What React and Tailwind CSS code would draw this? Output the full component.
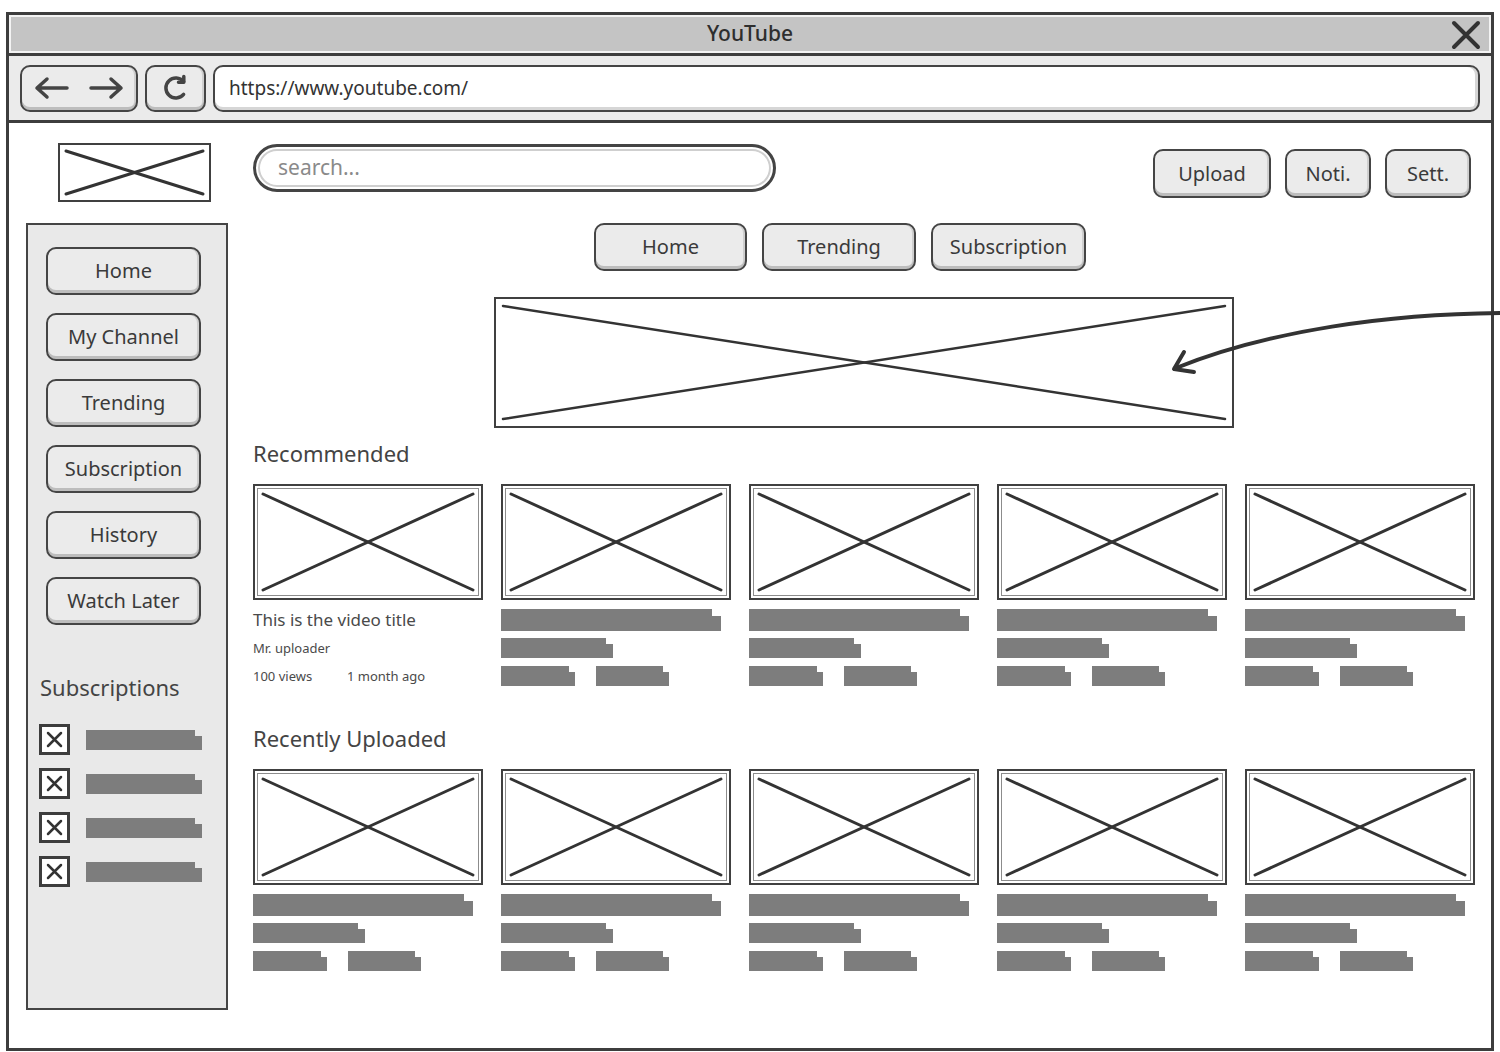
import React from "react";

const font = { fontFamily: '"Noto Sans", "DejaVu Sans", sans-serif' };

// box with an X through it (image placeholder)
const XBox = ({ className = "", vw, vh, inset = 8, stroke = 3, double = false }) => (
  <div
    className={`shrink-0 border-2 border-[#404040] bg-white ${
      double ? "shadow-[inset_0_0_0_2px_#ffffff,inset_0_0_0_3px_#8c8c8c]" : ""
    } ${className}`}
  >
    <svg className="block h-full w-full" viewBox={`0 0 ${vw} ${vh}`} preserveAspectRatio="none">
      <line x1={inset} y1={inset} x2={vw - inset} y2={vh - inset} stroke="#333" strokeWidth={stroke} strokeLinecap="round" />
      <line x1={inset} y1={vh - inset} x2={vw - inset} y2={inset} stroke="#333" strokeWidth={stroke} strokeLinecap="round" />
    </svg>
  </div>
);

// grey text placeholder with the little step at its right end
const Bar = ({ className = "", mainCls, endCls }) => (
  <div className={`flex items-end ${className}`}>
    <div className={`bg-[#7d7d7d] ${mainCls}`} />
    <div className={`bg-[#7d7d7d] ${endCls}`} />
  </div>
);

const Btn = ({ children, className = "" }) => (
  <div
    className={`flex shrink-0 items-center justify-center rounded-[10px] border-2 border-[#454545] bg-[#ebebeb] text-[20px] text-[#3a3a3a] shadow-[inset_0_-3px_0_#bdbdbd,inset_-2px_0_0_#cfcfcf] ${className}`}
  >
    {children}
  </div>
);

const Card = ({ first }) => (
  <div className="w-[230px] shrink-0">
    <XBox className="h-[116px] w-[230px]" vw={226} vh={112} inset={8} double />
    {first ? (
      <div className="text-[#4a4a4a]">
        <div className="mt-[9px] h-[22px] text-[17px] leading-[22px]">This is the video title</div>
        <div className="mt-[7px] h-[20px] text-[13px] leading-[20px]">Mr. uploader</div>
        <div className="mt-[8px] flex h-[20px] text-[13px] leading-[20px]">
          <span className="w-[94px]">100 views</span>
          <span>1 month ago</span>
        </div>
      </div>
    ) : (
      <div>
        <Bar className="mt-[9px]" mainCls="w-[211px] h-[22px]" endCls="w-[9px] h-[15px]" />
        <Bar className="mt-[7px]" mainCls="w-[105px] h-[20px]" endCls="w-[7px] h-[14px]" />
        <div className="mt-[8px] flex gap-[21px]">
          <Bar mainCls="w-[68px] h-[20px]" endCls="w-[6px] h-[14px]" />
          <Bar mainCls="w-[67px] h-[20px]" endCls="w-[6px] h-[14px]" />
        </div>
      </div>
    )}
  </div>
);

const CardRow = ({ withText }) => (
  <div className="mt-[16px] flex gap-[18px]">
    {[0, 1, 2, 3, 4].map((i) => (
      <Card key={i} first={withText && i === 0} />
    ))}
  </div>
);

const sideItems = ["Home", "My Channel", "Trending", "Subscription", "History", "Watch Later"];

export default function App() {
  return (
    <div className="relative h-[1052px] w-[1500px] overflow-hidden bg-white" style={font}>
      <div className="ml-[6px] mt-[12px] flex h-[1039px] w-[1488px] flex-col border-[3px] border-[#3d3d3d]">
        {/* title bar */}
        <div className="border-b-[3px] border-[#3d3d3d]">
          <div className="relative flex h-[38px] items-center justify-center border-2 border-[#f3f3f3] bg-[#c4c4c4]">
            <span className="text-[21px] font-medium text-[#2e2e2e]">YouTube</span>
            <svg className="absolute right-[8px] top-[3px] h-[30px] w-[30px]" viewBox="0 0 30 30">
              <path d="M3 3 L27 27 M27 3 L3 27" stroke="#333" strokeWidth="4" strokeLinecap="round" />
            </svg>
          </div>
        </div>

        {/* toolbar */}
        <div className="flex h-[67px] items-center gap-[7px] border-b-[3px] border-[#3d3d3d] bg-[#ebebeb] px-[11px]">
          <div className="flex h-[47px] w-[118px] shrink-0 items-center justify-center gap-[18px] rounded-[10px] border-2 border-[#454545] bg-[#ebebeb] shadow-[inset_0_-3px_0_#bdbdbd,inset_-2px_0_0_#cfcfcf]">
            <svg className="h-[24px] w-[36px]" viewBox="0 0 36 24">
              <path d="M33 12 H4 M13 3 L3 12 L13 21" fill="none" stroke="#444" strokeWidth="3.5" strokeLinecap="round" strokeLinejoin="round" />
            </svg>
            <svg className="h-[24px] w-[36px]" viewBox="0 0 36 24">
              <path d="M3 12 H32 M23 3 L33 12 L23 21" fill="none" stroke="#444" strokeWidth="3.5" strokeLinecap="round" strokeLinejoin="round" />
            </svg>
          </div>
          <div className="flex h-[47px] w-[61px] shrink-0 items-center justify-center rounded-[10px] border-2 border-[#454545] bg-[#ebebeb] shadow-[inset_0_-3px_0_#bdbdbd,inset_-2px_0_0_#cfcfcf]">
            <svg className="h-[30px] w-[30px]" viewBox="0 0 30 30">
              <path d="M22.6 8.6 A10 10 0 1 0 22.6 21.4" fill="none" stroke="#444" strokeWidth="3.5" strokeLinecap="round" />
              <path d="M22.8 3.5 V9.2 H17.5" fill="none" stroke="#444" strokeWidth="3.5" strokeLinecap="round" strokeLinejoin="round" />
            </svg>
          </div>
          <div className="flex h-[47px] flex-1 items-center rounded-[10px] border-2 border-[#454545] bg-white px-[14px] text-[19px] text-[#333] shadow-[inset_0_-3px_0_#d6d6d6,inset_-3px_0_0_#d6d6d6]">
            https://www.youtube.com/
          </div>
        </div>

        {/* content */}
        <div className="flex flex-1">
          {/* left column */}
          <div className="w-[219px] shrink-0 pl-[17px]">
            <XBox className="ml-[32px] mt-[20px] h-[59px] w-[153px]" vw={149} vh={55} inset={6} />
            <div className="mt-[21px] h-[787px] w-[202px] border-2 border-[#454545] bg-[#e9e9e9] pt-[22px]">
              <div className="flex flex-col gap-[18px] pl-[18px]">
                {sideItems.map((s) => (
                  <Btn key={s} className="h-[48px] w-[155px]">
                    {s}
                  </Btn>
                ))}
              </div>
              <div className="ml-[12px] mt-[47px] text-[22px] leading-[30px] text-[#444]">Subscriptions</div>
              <div className="ml-[11px] mt-[22px] flex flex-col gap-[13px]">
                {[0, 1, 2, 3].map((i) => (
                  <div key={i} className="flex items-center gap-[16px]">
                    <div className="h-[31px] w-[31px] border-[3px] border-[#3d3d3d] bg-white">
                      <svg className="block h-full w-full" viewBox="0 0 25 25">
                        <path d="M6 6 L19 19 M19 6 L6 19" stroke="#333" strokeWidth="2.5" strokeLinecap="round" />
                      </svg>
                    </div>
                    <Bar mainCls="w-[109px] h-[20px]" endCls="w-[7px] h-[14px]" />
                  </div>
                ))}
              </div>
            </div>
          </div>

          {/* main column */}
          <div className="ml-[25px] w-[1222px] pt-[21px]">
            <div className="flex items-start justify-between pr-[4px]">
              <div className="flex h-[48px] w-[523px] items-center rounded-full border-[3px] border-[#444] bg-white px-[22px] text-[21px] text-[#8a8a8a] shadow-[inset_0_0_0_2px_#ffffff,inset_0_0_0_4px_#cfcfcf]">
                search...
              </div>
              <div className="mt-[5px] flex gap-[14px]">
                <Btn className="h-[49px] w-[118px]">Upload</Btn>
                <Btn className="h-[49px] w-[86px]">Noti.</Btn>
                <Btn className="h-[49px] w-[86px]">Sett.</Btn>
              </div>
            </div>

            <div className="ml-[341px] mt-[25px] flex gap-[15px]">
              <Btn className="h-[48px] w-[153px]">Home</Btn>
              <Btn className="h-[48px] w-[154px]">Trending</Btn>
              <Btn className="h-[48px] w-[155px]">Subscription</Btn>
            </div>

            <XBox className="ml-[241px] mt-[26px] h-[131px] w-[740px]" vw={736} vh={127} inset={7} stroke={2.5} />

            <div className="mt-[10px] text-[22px] leading-[30px] text-[#444]">Recommended</div>
            <CardRow withText />

            <div className="mt-[37px] text-[22px] leading-[30px] text-[#444]">Recently Uploaded</div>
            <CardRow />
          </div>
        </div>
      </div>

      {/* annotation arrow pointing at the banner */}
      <svg className="pointer-events-none absolute left-0 top-0 h-[1052px] w-[1500px]" viewBox="0 0 1500 1052">
        <path d="M1500 313 C1390 314 1270 330 1176 368" fill="none" stroke="#333" strokeWidth="4" strokeLinecap="round" />
        <path d="M1184 352 L1174 369 L1194 372" fill="none" stroke="#333" strokeWidth="4" strokeLinecap="round" strokeLinejoin="round" />
      </svg>
    </div>
  );
}
